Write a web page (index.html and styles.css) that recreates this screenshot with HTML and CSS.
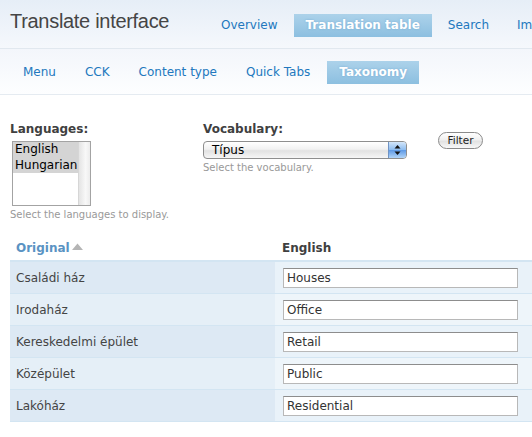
FILE: index.html
```html
<!DOCTYPE html>
<html lang="hu">
<head>
<meta charset="utf-8">
<title>Translate interface</title>
<link rel="stylesheet" href="styles.css">
</head>
<body>
<div class="header">
  <h1 class="title">Translate interface</h1>
  <ul class="tabs primary">
    <li><a href="#">Overview</a></li>
    <li class="active"><a href="#">Translation table</a></li>
    <li><a href="#">Search</a></li>
    <li><a href="#">Import</a></li>
  </ul>
</div>
<div class="subnav">
  <ul class="tabs secondary">
    <li><a href="#">Menu</a></li>
    <li><a href="#">CCK</a></li>
    <li><a href="#">Content type</a></li>
    <li><a href="#">Quick Tabs</a></li>
    <li class="active"><a href="#">Taxonomy</a></li>
  </ul>
</div>
<div class="content">
  <div class="filters">
    <div class="field field-lang">
      <div class="label">Languages:</div>
      <div class="listbox">
        <div class="opts">
          <div class="opt selected">English</div>
          <div class="opt selected">Hungarian</div>
        </div>
        <div class="scrolltrack"></div>
      </div>
      <div class="desc">Select the languages to display.</div>
    </div>
    <div class="field field-vocab">
      <div class="label">Vocabulary:</div>
      <div class="popup">
        <span class="popup-text">Típus</span>
        <span class="popup-btn">
          <svg width="7" height="12" viewBox="0 0 7 12"><polygon points="0.5,4.5 3.5,1 6.5,4.5" fill="#111"/><polygon points="0.5,7.5 3.5,11 6.5,7.5" fill="#111"/></svg>
        </span>
      </div>
      <div class="desc">Select the vocabulary.</div>
    </div>
    <button class="btn" type="button">Filter</button>
  </div>

  <table class="strings">
    <thead>
      <tr>
        <th class="col-orig"><a href="#" class="sort">Original</a><svg class="sort-arrow" width="11" height="7" viewBox="0 0 11 7"><polygon points="0,7 5.5,0.5 11,7" fill="#b5b5b5"/></svg></th>
        <th class="col-tr">English</th>
      </tr>
    </thead>
    <tbody>
      <tr class="odd"><td class="col-orig">Családi ház</td><td class="col-tr"><input class="text" type="text" value="Houses"></td></tr>
      <tr class="even"><td class="col-orig">Irodaház</td><td class="col-tr"><input class="text" type="text" value="Office"></td></tr>
      <tr class="odd"><td class="col-orig">Kereskedelmi épület</td><td class="col-tr"><input class="text" type="text" value="Retail"></td></tr>
      <tr class="even"><td class="col-orig">Középület</td><td class="col-tr"><input class="text" type="text" value="Public"></td></tr>
      <tr class="odd"><td class="col-orig">Lakóház</td><td class="col-tr"><input class="text" type="text" value="Residential"></td></tr>
    </tbody>
  </table>
</div>
</body>
</html>
```
FILE: styles.css
```css
html, body {
  margin: 0;
  padding: 0;
}
body {
  width: 532px;
  overflow: hidden;
  background: #fff;
  color: #444;
  font-family: "DejaVu Sans", Verdana, sans-serif;
  font-size: 12px;
}

/* Header */
.header {
  display: flex;
  align-items: flex-start;
  height: 48px;
  padding-left: 10px;
  background: linear-gradient(#e6eef7, #f5f8fc);
  border-bottom: 1px solid #e1e8ef;
  white-space: nowrap;
  overflow: hidden;
}
.title {
  flex: none;
  width: 199px;
  margin: 9px 0 0;
  font: normal 20px/24px "Liberation Sans", Arial, sans-serif;
  letter-spacing: -0.3px;
  color: #454545;
}

.tabs {
  display: flex;
  flex: none;
  gap: 5px;
  margin: 0;
  padding: 0;
  list-style: none;
  white-space: nowrap;
}
.tabs a {
  display: block;
  height: 23px;
  line-height: 23px;
  padding: 0 12px;
  color: #2278be;
  text-decoration: none;
}
.tabs .active a {
  background: linear-gradient(#acd2ea, #8cbfe0);
  color: #fff;
  font-weight: bold;
  text-shadow: 0 0 2px rgba(90, 150, 200, 0.6);
}
.primary {
  gap: 4px;
  margin-top: 14px;
}

.subnav {
  box-sizing: border-box;
  height: 46px;
  padding: 12px 0 0 11px;
  background: linear-gradient(#f3f6fb, #fdfeff);
  border-bottom: 1px solid #e5ebf1;
  overflow: hidden;
}

/* Content */
.content {
  padding: 26px 0 0 10px;
}

.filters {
  display: flex;
  align-items: flex-start;
}
.field-lang {
  width: 193px;
}
.field-vocab {
  width: 235px;
}
.label {
  font-weight: bold;
  line-height: 16px;
  margin-bottom: 4px;
  color: #404040;
}
.desc {
  margin-top: 2px;
  font-size: 10px;
  line-height: 14px;
  color: #999;
}

.listbox {
  display: flex;
  box-sizing: border-box;
  width: 79px;
  height: 65px;
  margin-left: 2px;
  border: 1px solid #a3a3a3;
  background: #fff;
}
.opts {
  flex: 1;
}
.opt {
  height: 15.5px;
  line-height: 15.5px;
  padding-left: 2px;
  color: #000;
}
.opt.selected {
  background: #d4d4d4;
}
.scrolltrack {
  width: 11px;
  border-left: 1px solid #d6d6d6;
  background: linear-gradient(to right, #e4e4e4, #f8f8f8 60%, #ececec);
}

.popup {
  display: flex;
  align-items: stretch;
  box-sizing: border-box;
  width: 204px;
  height: 18px;
  border: 1px solid #8e8e8e;
  border-radius: 4px;
  background: linear-gradient(#ffffff, #f1f1f1 45%, #e2e2e2 55%, #f6f6f6);
}
.popup-text {
  flex: 1;
  padding-left: 8px;
  line-height: 16px;
  color: #000;
}
.popup-btn {
  display: flex;
  align-items: center;
  justify-content: center;
  width: 17px;
  border-left: 1px solid #6f93c4;
  border-radius: 0 3px 3px 0;
  background: linear-gradient(#d3e6fa, #8ebdf0 48%, #5f9ae6 52%, #b2d5f8);
}

.btn {
  box-sizing: border-box;
  width: 45px;
  height: 17px;
  margin-top: 11px;
  padding: 0;
  border: 1px solid #8a8a8a;
  border-radius: 9px;
  background: linear-gradient(#ffffff, #f0f0f0 45%, #e2e2e2 55%, #f8f8f8);
  font-family: "DejaVu Sans", Verdana, sans-serif;
  font-size: 10.5px;
  line-height: 15px;
  color: #222;
}

/* Table */
.strings {
  width: 522px;
  margin-top: 14px;
  border-collapse: separate;
  border-spacing: 0;
  table-layout: fixed;
}
.strings th {
  height: 16px;
  padding: 4px 6px;
  line-height: 16px;
  text-align: left;
  font-weight: bold;
  color: #404040;
  border-bottom: 2px solid #d3e5f2;
  background: #fff;
  white-space: nowrap;
}
.strings th.col-orig {
  width: 253px;
}
.strings th.col-tr {
  padding-left: 7px;
}
.sort {
  color: #5a93c3;
  text-decoration: none;
}
.sort-arrow {
  margin-left: 2px;
  vertical-align: 2px;
}
.strings td {
  padding: 6px 8px 5px;
  line-height: 20px;
  border-bottom: 1px solid #d3e5f2;
  vertical-align: middle;
  color: #444;
}
.strings td.col-orig {
  padding-left: 6px;
}
.strings tr.odd td.col-orig {
  background: #dde9f4;
}
.strings tr.odd td.col-tr {
  background: #e9f2f9;
}
.strings tr.even td.col-orig {
  background: #e5eff7;
}
.strings tr.even td.col-tr {
  background: #eef5fa;
}
.text {
  display: block;
  box-sizing: border-box;
  width: 235px;
  height: 20px;
  margin: 0;
  padding: 0 3px;
  border: 1px solid #b8b8b8;
  border-top-color: #8d8d8d;
  background: #fff;
  font-family: "DejaVu Sans", Verdana, sans-serif;
  font-size: 12px;
  color: #333;
}
```
